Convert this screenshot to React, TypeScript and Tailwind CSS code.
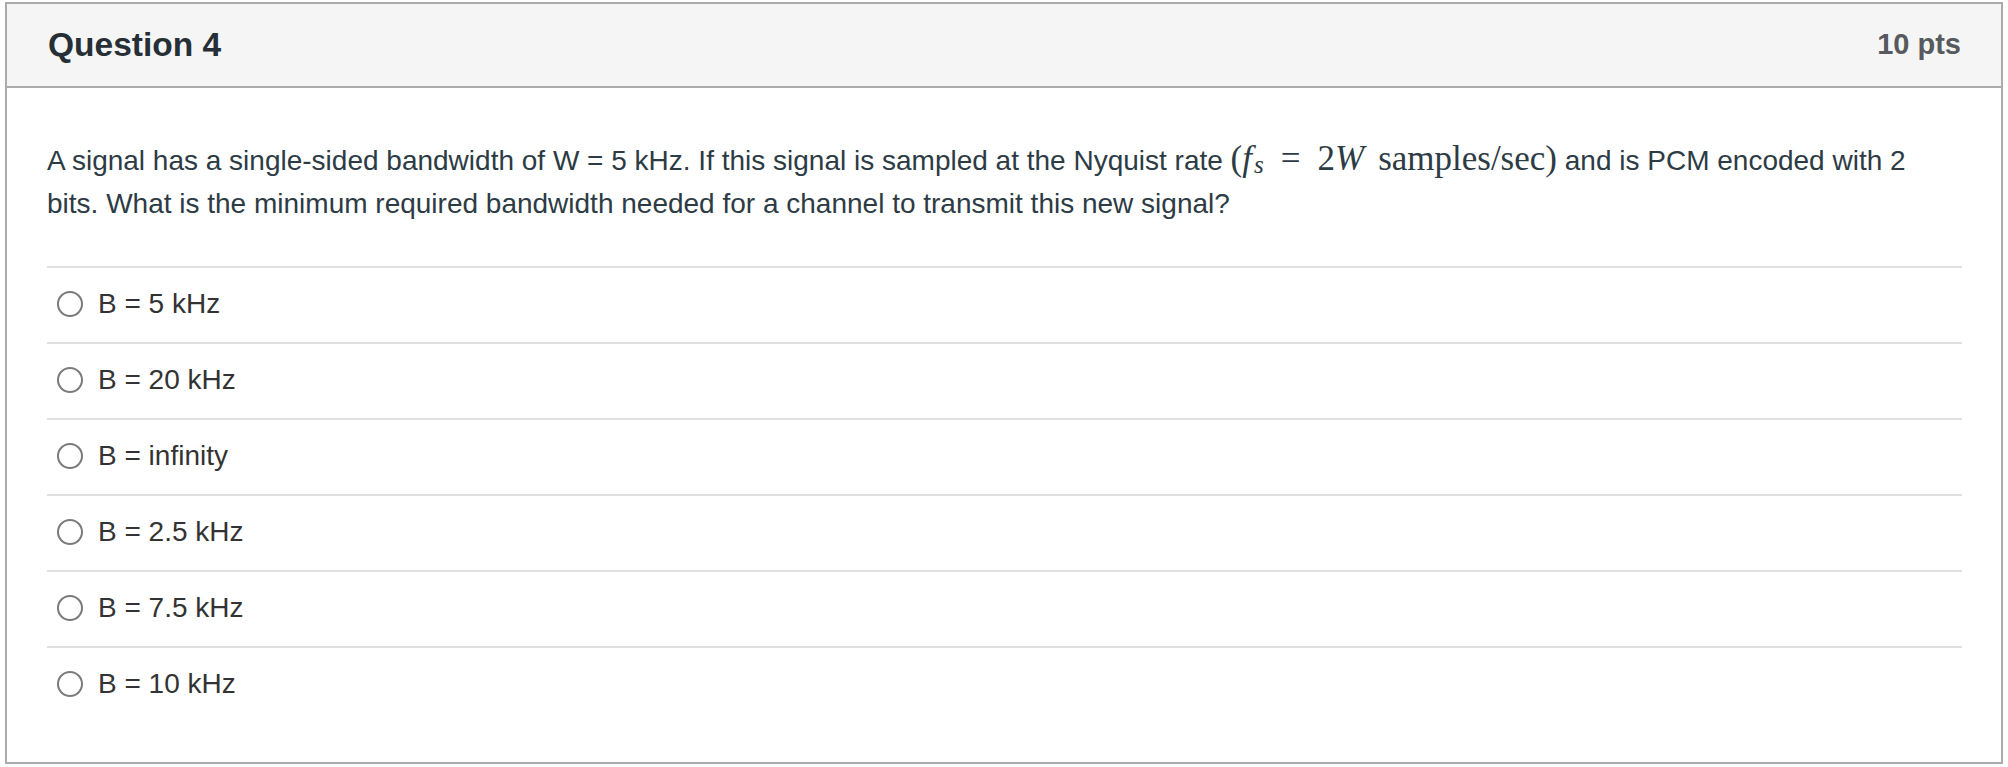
const options = [
  "B = 5 kHz",
  "B = 20 kHz",
  "B = infinity",
  "B = 2.5 kHz",
  "B = 7.5 kHz",
  "B = 10 kHz",
];

function Radio() {
  return (
    <span className="w-[26px] h-[26px] rounded-full border-2 border-[#7a7a7a] bg-white shrink-0" />
  );
}

function NyquistMath() {
  // f_s = 2W samples/sec, typeset in a serif face
  return (
    <span className="font-['Liberation_Serif',serif] text-[35px] leading-none whitespace-nowrap">
      (<i className="mr-[2px]">f</i>
      <sub className="italic text-[25px] relative top-[3px]">s</sub>
      <span className="mx-[17px]">=</span>2<i>W</i>
      <span className="ml-[14px]">samples/sec</span>)
    </span>
  );
}

export default function App() {
  return (
    <div className="w-full h-[767px] bg-white pt-[2px] pb-[3px] pl-[5px] pr-[5px] font-['Liberation_Sans',Arial,sans-serif]">
      <div className="h-full border-2 border-[#ababab] flex flex-col">
        <header className="h-[84px] bg-[#f5f5f5] border-b-2 border-[#ababab] flex items-center justify-between pl-[41px] pr-[40px] shrink-0">
          <h2 className="text-[33.5px] font-bold text-[#262f36]">Question 4</h2>
          <span className="text-[29px] font-bold text-[#565a5e]">10 pts</span>
        </header>

        <div className="flex-1 pl-[40px] pr-[39px] pt-[51px] text-[#2d3b45]">
          <p className="text-[28px] leading-[43px] pr-[30px]">
            A signal has a single-sided bandwidth of W = 5 kHz. If this signal is sampled at the Nyquist rate{" "}
            <NyquistMath /> and is PCM encoded with 2 bits. What is the minimum required bandwidth needed for a
            channel to transmit this new signal?
          </p>

          <div className="mt-[41px]">
            {options.map((label) => (
              <div
                key={label}
                className="h-[76px] border-t-2 border-[#e0e0e0] flex items-center gap-[15px] pl-[10px] pb-[3px]"
              >
                <Radio />
                <span className="text-[28px] text-[#333]">{label}</span>
              </div>
            ))}
          </div>
        </div>
      </div>
    </div>
  );
}
